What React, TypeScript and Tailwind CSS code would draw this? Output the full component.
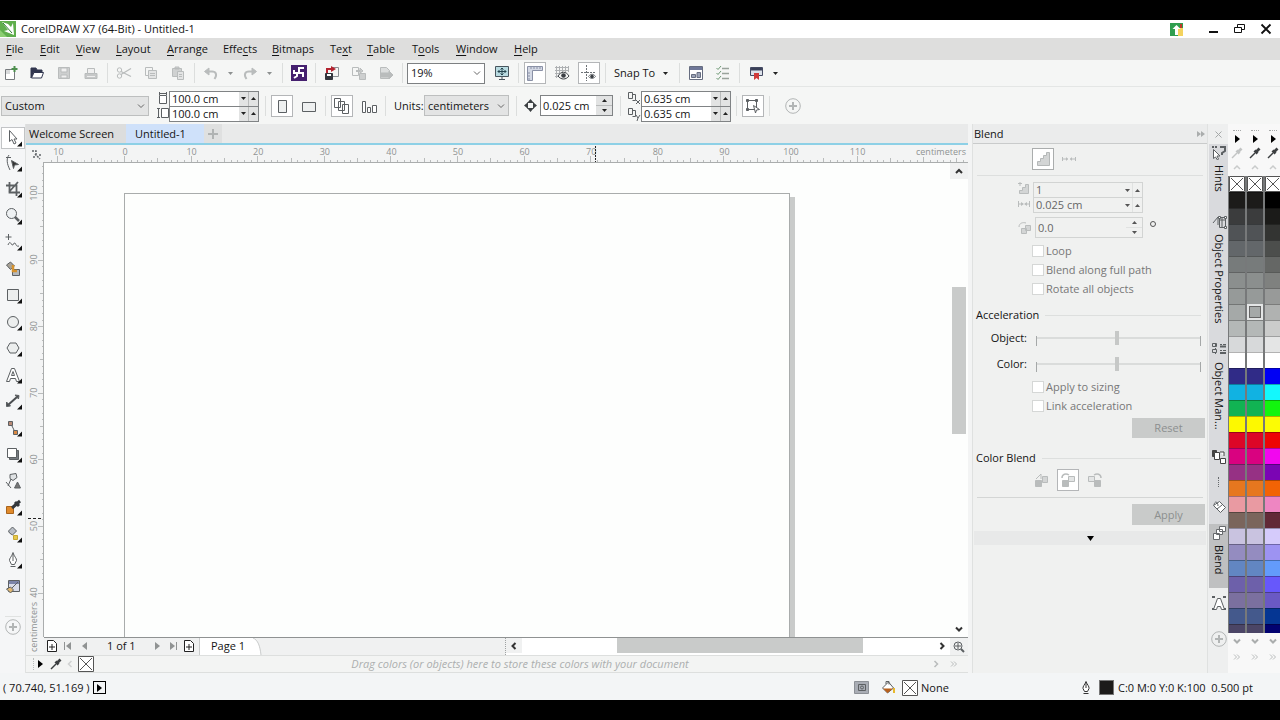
import type { ReactNode } from "react";
import clsx from "clsx";

const STROKE = "#5c6063";
const FADED = "#b9bcbc";

interface IconProps {
  children: ReactNode;
  size?: number;
  stroke?: string;
}

function Icon({ children, size = 16, stroke = STROKE }: IconProps) {
  return (
    <svg
      width={size}
      height={size}
      viewBox={`0 0 ${size} ${size}`}
      fill="none"
      stroke={stroke}
      aria-hidden="true"
      className="shrink-0"
    >
      {children}
    </svg>
  );
}

function IconButton({
  label,
  children,
  active = false,
}: {
  label: string;
  children: ReactNode;
  active?: boolean;
}) {
  return (
    <button
      type="button"
      aria-label={label}
      className="flex h-[22px] w-[27px] shrink-0 items-center justify-center"
    >
      <span
        className={clsx(
          "flex size-[22px] items-center justify-center",
          active && "border border-[#b4b6b8] bg-white",
        )}
      >
        {children}
      </span>
    </button>
  );
}

function Separator() {
  return (
    <div className="flex h-5 w-1.5 shrink-0 justify-center">
      <div className="w-px bg-[#dcdedd]" />
    </div>
  );
}

function Caret({ up = false, color = "#222" }: { up?: boolean; color?: string }) {
  return (
    <svg width="5" height="3" viewBox="0 0 5 3" fill={color} aria-hidden="true">
      <path d={up ? "M0 3h5L2.5 0z" : "M0 0h5L2.5 3z"} />
    </svg>
  );
}

function DropArrow({ label, faded = false }: { label: string; faded?: boolean }) {
  return (
    <button type="button" aria-label={label} className="flex h-5 w-3 shrink-0 items-center justify-center">
      <Caret color={faded ? "#8d9090" : "#222"} />
    </button>
  );
}

function Chevron({ d, color = "#333", width = 1.5 }: { d: string; color?: string; width?: number }) {
  return (
    <svg width="8" height="8" viewBox="0 0 8 8" fill="none" stroke={color} strokeWidth={width} aria-hidden="true">
      <path d={d} />
    </svg>
  );
}

const CHEVRON_UP = "M1 6l3-3 3 3";
const CHEVRON_DOWN = "M1 2.500l3 3 3-3";
const CHEVRON_LEFT = "M5.500 1l-3 3 3 3";
const CHEVRON_RIGHT = "M2.500 1l3 3-3 3";
const CHEVRON_DOUBLE = "M1 1.500l2.500 2.500L1 6.500M4 1.500l2.500 2.500L4 6.500";

/* ---------- title and menus ---------- */

function TitleBar() {
  return (
    <header className="flex h-[18px] shrink-0 items-center bg-white pr-2">
      <svg width="16" height="16" viewBox="0 0 16 16" aria-hidden="true">
        <path fill="#5fae4c" d="M0 0h16v16H0z" />
        <path fill="#8ccf72" d="M0 9l7 7H0z" />
        <path fill="#fff" d="M2 1l6 2 3 3 2-4 1 12-10-4 4-1z" />
        <path stroke="#2f7d32" d="M3 2l9 10" />
      </svg>
      <h1 className="ml-[5px] flex-1 text-[11px]">CorelDRAW X7 (64-Bit) - Untitled-1</h1>
      <svg width="13" height="13" viewBox="0 0 13 13" className="mr-[25px]" aria-hidden="true">
        <path fill="#2f9e4f" d="M0 0h13v13H0z" />
        <path fill="#f4d35e" d="M8 5h5v8H8z" />
        <path fill="#fff" d="M6.500 2l4 4H8v6H5V6H2.500z" />
        <path fill="#c0392b" d="M10 1h2v4h-2z" />
      </svg>
      <button type="button" aria-label="Minimize" className="flex w-[26px] items-center">
        <Icon size={12} stroke="#111"><path strokeWidth="2" d="M1 9h9" /></Icon>
      </button>
      <button type="button" aria-label="Restore" className="flex w-[26px] items-center">
        <Icon size={12} stroke="#111"><path d="M.500 4.500h7v5h-7zM3.500 4V1.500h7v5H8" /></Icon>
      </button>
      <button type="button" aria-label="Close" className="flex items-center">
        <Icon size={12} stroke="#111"><path strokeWidth="1.800" d="M1.500 1.500l9 9M10.500 1.500l-9 9" /></Icon>
      </button>
    </header>
  );
}

const MENUS = [
  { pre: "", key: "F", post: "ile", width: "w-[34px]" },
  { pre: "", key: "E", post: "dit", width: "w-9" },
  { pre: "", key: "V", post: "iew", width: "w-10" },
  { pre: "", key: "L", post: "ayout", width: "w-[51px]" },
  { pre: "", key: "A", post: "rrange", width: "w-14" },
  { pre: "Effe", key: "c", post: "ts", width: "w-[49px]" },
  { pre: "", key: "B", post: "itmaps", width: "w-[58px]" },
  { pre: "Te", key: "x", post: "t", width: "w-[37px]" },
  { pre: "", key: "T", post: "able", width: "w-[45px]" },
  { pre: "T", key: "o", post: "ols", width: "w-11" },
  { pre: "", key: "W", post: "indow", width: "w-[58px]" },
  { pre: "", key: "H", post: "elp", width: "w-10" },
];

function MenuBar() {
  return (
    <nav className="flex h-[22px] shrink-0 items-center bg-[#dededd] pl-1.5">
      {MENUS.map((menu) => (
        <button
          key={menu.pre + menu.key + menu.post}
          type="button"
          className={clsx("shrink-0 text-left whitespace-nowrap", menu.width)}
        >
          {menu.pre}
          <span className="underline underline-offset-2">{menu.key}</span>
          {menu.post}
        </button>
      ))}
    </nav>
  );
}

/* ---------- standard toolbar ---------- */

function StandardToolbar() {
  return (
    <div className="flex h-[27px] shrink-0 items-center border-b border-[#e4e6e5] bg-[#f5f6f5]">
      <div className="-ml-1 flex">
        <IconButton label="New">
          <Icon stroke="#777b7e">
            <path fill="#fff" d="M3.500 4.500h9v10h-9z" />
            <path fill="#d9dbdc" d="M4 5h4v4H4z" stroke="none" />
            <path stroke="#4d8f4d" strokeWidth="2" d="M12.500 1v6M9.500 4h6" />
          </Icon>
        </IconButton>
        <IconButton label="Open">
          <Icon stroke="#31364f">
            <path fill="#31364f" d="M2 3h5l1 2h5v2H5l-3 6z" />
            <path fill="#fff" d="M5 7.500h9.500l-2 5.500h-10z" />
          </Icon>
        </IconButton>
        <IconButton label="Save">
          <Icon stroke={FADED}>
            <path fill="#cdcfcf" d="M2.500 2.500h11v11h-11z" />
            <path fill="#f0f0f0" d="M5 3h6v4H5zM5 10h6v3H5z" />
          </Icon>
        </IconButton>
        <IconButton label="Print">
          <Icon stroke={FADED}>
            <path fill="#c6c8c8" d="M2 8.500h12v5H2z" />
            <path fill="#f0f0f0" d="M4.500 3.500h7v5h-7z" />
            <path d="M4 11.500h8" stroke="#eee" />
          </Icon>
        </IconButton>
      </div>
      <Separator />
      <IconButton label="Cut">
        <Icon stroke={FADED}>
          <path strokeWidth="1.300" d="M15 3.500L5 9.500M15 11.500L5 6.500" />
          <circle cx="3.500" cy="5" r="2.200" /><circle cx="3.500" cy="11" r="2.200" />
        </Icon>
      </IconButton>
      <IconButton label="Copy">
        <Icon stroke={FADED}>
          <path d="M2.500 2.500h7v8h-7z" />
          <path fill="#e3e4e4" d="M5.500 5.500h8v8h-8z" />
          <path d="M7 8.500h5M7 10.500h5" />
        </Icon>
      </IconButton>
      <IconButton label="Paste">
        <Icon stroke={FADED}>
          <path fill="#cfd1d1" d="M2.500 3.500h9v8h-9zM5 2h4v2H5z" />
          <path fill="#e3e4e4" d="M7.500 6.500h6v8h-6z" />
          <path d="M9 9.500h3M9 11.500h3" />
        </Icon>
      </IconButton>
      <Separator />
      <IconButton label="Undo">
        <Icon stroke={FADED}>
          <path fill={FADED} d="M1.500 6.500L6 3v7z" />
          <path strokeWidth="2" d="M5 6.500h4c4 0 5.500 3 2.500 7.500" />
        </Icon>
      </IconButton>
      <DropArrow label="Undo list" faded />
      <IconButton label="Redo">
        <Icon stroke={FADED}>
          <path fill={FADED} d="M14.500 6.500L10 3v7z" />
          <path strokeWidth="2" d="M11 6.500H7c-4 0-5.500 3-2.500 7.500" />
        </Icon>
      </IconButton>
      <DropArrow label="Redo list" faded />
      <div className="w-1" />
      <Separator />
      <IconButton label="Search content">
        <Icon>
          <path fill="#45206f" stroke="none" d="M0 0h16v16H0z" />
          <path stroke="#fff" strokeWidth="2" d="M13 3H8v5M3 5v3h9v4M6 8v3l-3 2" />
        </Icon>
      </IconButton>
      <Separator />
      <IconButton label="Import">
        <Icon stroke="#33363d">
          <path d="M9 2.500h5.500v9H9" stroke="#8c9094" />
          <path fill="#33363d" d="M1.500 8.500h7v6h-7z" />
          <path fill="#fff" stroke="none" d="M3 9h4v2H3z" />
          <path stroke="#b32430" strokeWidth="2" d="M3 8V4h5" />
          <path fill="#b32430" stroke="none" d="M7 1l5 3-5 3z" />
        </Icon>
      </IconButton>
      <IconButton label="Export">
        <Icon stroke={FADED}>
          <path d="M1.500 2.500h6v8h-6z" /><path strokeWidth="2" d="M5 6h6" />
          <path fill="#cdcfcf" d="M8.500 8.500h6v6h-6zM9 3l3 3-3 2z" />
        </Icon>
      </IconButton>
      <IconButton label="Publish to PDF">
        <Icon stroke={FADED}>
          <path fill="#dcdede" d="M2.500 13.500v-11h6l3 3v8z" />
          <path fill={FADED} d="M3 8h8V6l4 4-4 4v-2H3z" />
        </Icon>
      </IconButton>
      <Separator />
      <ComboBox label="Zoom level" value="19%" className="ml-0.5 h-[21px] w-[78px] border-[#7d8082] bg-white" />
      <div className="w-[3px]" />
      <IconButton label="Full-screen preview">
        <Icon stroke="#48565e">
          <path fill="#b9dbe1" d="M1.500 1.500h13v10h-13z" />
          <path d="M5 14.500h6M8 12v2" />
          <path stroke="#24444e" d="M8 3v7M4 6.500h8M6.500 4.500L8 3l1.500 1.500M6.500 8.500L8 10l1.500-1.500M5.500 5L4 6.500 5.500 8M10.500 5L12 6.500 10.500 8" />
        </Icon>
      </IconButton>
      <Separator />
      <IconButton label="Show rulers" active>
        <Icon stroke="#8a91a6">
          <path fill="#d3d8e4" d="M.500 1.500h15v4h-10v10h-5z" />
          <path d="M4 2v2M7 2v2M10 2v2M13 2v2M1 8h2M1 11h2M1 14h2" />
        </Icon>
      </IconButton>
      <IconButton label="Show grid">
        <Icon stroke="#aeb1b3">
          <path d="M2.500 1v12M5.500 1v12M8.500 1v6M11.500 1v6M14.500 1v6M1 2.500h14M1 5.500h14M1 8.500h4M1 11.500h4" />
          <path fill="#f5f6f5" stroke="#3b3f44" d="M4 11c3-5 8-5 11 0-3 4-8 4-11 0z" />
          <circle cx="9.500" cy="10.500" r="2.300" fill="#3b3f44" stroke="none" />
        </Icon>
      </IconButton>
      <IconButton label="Show guidelines" active>
        <Icon stroke="#6e7377">
          <path strokeDasharray="2 1" d="M5.500 0v16M0 7.500h15" />
          <path fill="#fff" d="M7.500 11.500c2-3 5-3 7 0-2 2.500-5 2.500-7 0z" />
          <circle cx="11" cy="11.500" r="1.800" fill="#3b3f44" stroke="none" />
        </Icon>
      </IconButton>
      <Separator />
      <button type="button" className="ml-1.5 flex w-[62px] shrink-0 items-center justify-between whitespace-nowrap">
        Snap To
        <span className="pr-2"><Caret /></span>
      </button>
      <Separator />
      <IconButton label="Options">
        <Icon stroke="#666d80">
          <path fill="#fff" d="M1.500 1.500h13v13h-13z" />
          <path fill="#6f7798" stroke="none" d="M2 2h12v3H2z" />
          <path fill="#9da4b8" d="M3.500 9.500h4v3h-4zM9 7.500h3.500v5H9z" />
        </Icon>
      </IconButton>
      <IconButton label="Application launcher">
        <Icon stroke="#9aa39c">
          <path d="M7 3.500h7M7 8.500h7M7 13.500h7" strokeWidth="1.500" />
          <path stroke="#6f9a75" d="M1.500 3l1.500 1.500L6 1M1.500 8L3 9.500 6 6M1.500 13l1.500 1.500L6 11" />
        </Icon>
      </IconButton>
      <Separator />
      <IconButton label="Welcome">
        <Icon stroke="#454a63">
          <path fill="#dde2ea" d="M2.500 2.500h12v8h-12z" />
          <path fill="#31364f" d="M3 3h11v2H3z" />
          <path fill="#d03a3a" stroke="none" d="M6 8h5v7l-2.500-2L6 15z" />
        </Icon>
      </IconButton>
      <DropArrow label="Welcome list" />
    </div>
  );
}

function ComboBox({ label, value, className }: { label: string; value: string; className: string }) {
  return (
    <div className={clsx("relative flex shrink-0 items-center border", className)}>
      <select aria-label={label} className="h-full w-full appearance-none pl-[3px] outline-none" defaultValue={value}>
        <option>{value}</option>
      </select>
      <span className="pointer-events-none absolute right-[3px]">
        <Chevron d={CHEVRON_DOWN} color="#666" width={1} />
      </span>
    </div>
  );
}

/* ---------- property bar ---------- */

interface SpinFieldProps {
  label: string;
  value: string;
  stacked?: boolean;
  disabled?: boolean;
}

function SpinField({ label, value, stacked = false, disabled = false }: SpinFieldProps) {
  const arrow = clsx(
    "flex flex-1 items-center justify-center",
    disabled ? "bg-[#f0f1f0]" : "bg-[#e2e3e3]",
  );
  return (
    <div
      className={clsx(
        "flex min-w-0 flex-1 items-stretch border",
        stacked ? "h-[21px]" : "h-4",
        disabled ? "border-[#d2d4d3] bg-[#f0f1f0] text-[#666]" : "border-[#808385] bg-white",
      )}
    >
      <input aria-label={label} defaultValue={value} disabled={disabled} className="w-full min-w-0 flex-1 pl-0.5 outline-none" />
      <div className={clsx("flex gap-px", stacked ? "w-4 flex-col-reverse" : "w-[19px]", disabled ? "bg-[#e0e2e1]" : "bg-[#b9bbbb]")}>
        <button type="button" aria-label={`Decrease ${label}`} className={arrow}><Caret color={disabled ? "#555" : undefined} /></button>
        <button type="button" aria-label={`Increase ${label}`} className={arrow}><Caret up color={disabled ? "#555" : undefined} /></button>
      </div>
    </div>
  );
}

function PropertyBar() {
  return (
    <div className="flex h-[37px] shrink-0 items-center bg-[#f5f6f5] pl-px">
      <ComboBox label="Page size" value="Custom" className="h-5 w-[148px] border-[#bdbfbf] bg-[#e3e4e4]" />
      <div className="ml-[7px] flex w-[13px] shrink-0 flex-col items-center gap-[3px]">
        <Icon size={12}><path fill="#fff" d="M2.500 3.500h7v8h-7zM2 1.500h8M2.500 0v3M9.500 0v3" /></Icon>
        <Icon size={12}><path fill="#fff" d="M4.500 1.500h7v9h-7zM1.500 1.500v9M0 1.500h3M0 10.500h3" /></Icon>
      </div>
      <div className="mt-px flex w-[90px] shrink-0 flex-col">
        <div className="flex"><SpinField label="page width" value="100.0 cm" /></div>
        <div className="-mt-px flex"><SpinField label="page height" value="100.0 cm" /></div>
      </div>
      <div className="w-[3px]" />
      <Separator />
      <IconButton label="Portrait" active>
        <Icon><path fill="#eef0f0" d="M4.500 2.500h8v12h-8z" /></Icon>
      </IconButton>
      <IconButton label="Landscape">
        <Icon><path fill="#eef0f0" d="M1.500 4.500h13v9h-13z" /></Icon>
      </IconButton>
      <Separator />
      <IconButton label="All pages" active>
        <Icon><path fill="#fff" d="M8.500 6.500h6v9h-6zM4.500 3.500h6v9h-6zM.500.500h6v9h-6z" /></Icon>
      </IconButton>
      <IconButton label="Current page">
        <Icon><path fill="#fff" d="M1.500 3.500h3v11h-3zM6.500 9.500h3v5h-3zM11.500 7.500h4v7h-4z" /></Icon>
      </IconButton>
      <Separator />
      <label className="ml-1.5 flex shrink-0 items-center">
        <span className="w-[30px]">Units:</span>
        <ComboBox label="Units" value="centimeters" className="h-[21px] w-[85px] border-[#bdbfbf] bg-[#e3e4e4]" />
      </label>
      <div className="w-1" />
      <Separator />
      <div className="ml-1 flex w-[90px] shrink-0 items-center gap-0.5">
        <Icon size={15} stroke="#3c4043">
          <path d="M4.500 4.500h6v6h-6z" />
          <path fill="#3c4043" stroke="none" d="M7.500 1L10 4H5zM7.500 14L10 11H5zM1 7.500L4 5v5zM14 7.500L11 5v5z" />
        </Icon>
        <SpinField label="nudge distance" value="0.025 cm" stacked />
      </div>
      <div className="w-1" />
      <Separator />
      <div className="ml-[3px] flex w-[15px] shrink-0 flex-col items-center gap-0.5">
        <Icon size={14}><path d="M1.500 1.500h4v6h-4zM5.500 3.500h3v6h-3M9 9l4 4M13 9l-4 4" /></Icon>
        <Icon size={14}><path d="M1.500 1.500h4v6h-4zM5.500 3.500h3v6h-3M9 8l2 3 2-3M11 11l-1 3" /></Icon>
      </div>
      <div className="mt-px flex w-[90px] shrink-0 flex-col">
        <div className="flex"><SpinField label="duplicate x" value="0.635 cm" /></div>
        <div className="-mt-px flex"><SpinField label="duplicate y" value="0.635 cm" /></div>
      </div>
      <div className="w-0.5" />
      <Separator />
      <IconButton label="Treat as filled" active>
        <Icon>
          <path d="M2.500 2.500h9v9h-9z" />
          <path fill={STROKE} d="M1.500 1.500h2v2h-2zM10.500 1.500h2v2h-2zM1.500 10.500h2v2h-2z" />
          <path fill="#fff" d="M8.500 7.500l6 4-3 .5-1 3z" />
        </Icon>
      </IconButton>
      <Separator />
      <div className="w-[7px]" />
      <IconButton label="Customize property bar"><PlusCircle /></IconButton>
    </div>
  );
}

function PlusCircle() {
  return (
    <Icon stroke="#b2b5b5">
      <circle cx="8" cy="8" r="7.300" />
      <path strokeWidth="2" d="M8 4v8M4 8h8" />
    </Icon>
  );
}

/* ---------- toolbox ---------- */

const TOOLS: { name: string; flyout: boolean; art: ReactNode }[] = [
  { name: "Pick", flyout: true, art: <path fill="#fff" d="M7.500 3.500v11l2.500-2 2 4.500 2-1-2-4h3z" /> },
  {
    name: "Shape", flyout: true,
    art: <><path d="M7 3c-3 4-2 9 1 15M4 5.500h5" /><path fill="#333" d="M9.500 8.500l7 4-4 .5-1 3.500z" /></>,
  },
  { name: "Crop", flyout: true, art: <path strokeWidth="1.800" d="M7.500 4v10.500H18M4 7.500h10.500V18M16 4L7 14" /> },
  {
    name: "Zoom", flyout: true,
    art: <><circle cx="9.500" cy="8.500" r="5" fill="#eef1f3" /><path strokeWidth="2.500" d="M13 12l4 4" /></>,
  },
  { name: "Freehand", flyout: true, art: <path d="M6.500 3v6M3.500 6h6M6 14c2-5 3-1 4 0s2-3 3-2 1 4 4 3" /> },
  {
    name: "Smart fill", flyout: false,
    art: <><path fill="#a8a296" d="M4.500 7l4-3 4 4-4 3.500z" /><path fill="#b3b7bc" d="M10.500 11.500h7v6h-7z" /><path stroke="#d6922d" strokeWidth="2.500" d="M11 7v6h4" /></>,
  },
  { name: "Rectangle", flyout: true, art: <path fill="#eceeee" d="M5.500 5.500h11v11h-11z" /> },
  { name: "Ellipse", flyout: true, art: <circle cx="11" cy="11" r="5.500" fill="#eceeee" /> },
  { name: "Polygon", flyout: true, art: <path fill="#eceeee" d="M8 6h6l3 5-3 5H8l-3-5z" /> },
  { name: "Text", flyout: true, art: <path fill="#fff" d="M4.500 17.500l5-13h3l5 13h-3l-1-3h-5l-1 3zM9.500 11.500h3l-1.500-4z" /> },
  {
    name: "Dimension", flyout: true,
    art: <><path strokeWidth="2" stroke="#4a4d50" d="M6 15l9-8" /><path fill="#4a4d50" d="M4.500 12l4 4-4 .500zM13 5l4 .500-.500 3.500z" /></>,
  },
  {
    name: "Connector", flyout: true,
    art: <><path d="M9 7l4 8" /><path fill="#b98a76" d="M6.500 4.500h4v4h-4z" /><path fill="#d98842" d="M11.500 13.500h4v4h-4z" /></>,
  },
  {
    name: "Drop shadow", flyout: true,
    art: <><path fill="#777b80" d="M7.500 7.500h9v9h-9z" /><path fill="#fff" d="M5.500 5.500h9v9h-9z" /></>,
  },
  {
    name: "Transparency", flyout: false,
    art: <><path fill="#dfe2e4" d="M8 4.500l6-1 1 4-4 3-3-2zM9 9l-3 7M4 12l5 6" /><path fill="#777" d="M15.500 12l3 6h-6z" /></>,
  },
  {
    name: "Color eyedropper", flyout: true,
    art: <><path fill="#e08a2b" stroke="#a8631d" d="M4.500 10.500h7v7h-7z" /><path stroke="#34383c" strokeWidth="3" d="M10 12l8-7M13 6l4 4" /></>,
  },
  {
    name: "Interactive fill", flyout: true,
    art: <><path fill="#b9bec6" d="M6.500 8l4-4 4 4-4 4-3-2z" /><path fill="#e5c84d" stroke="#c7a730" d="M11.500 12.500h4v4h-4z" /></>,
  },
  { name: "Outline pen", flyout: true, art: <path fill="#fff" d="M11 3.500c-1 4-4 6-3.500 8l2 4h3l2-4c.5-2-2.500-4-3.500-8zM11 5v7M8.500 17.500h5" /> },
  {
    name: "Edit fill", flyout: false,
    art: <><path fill="#d8dce8" d="M6.500 4.500h11v11h-11z" /><path fill="#7c85aa" stroke="none" d="M7 5h10v3H7z" /><path fill="#e1b871" d="M4.500 13l4-2 3 3-3 3z" /><path d="M10 12l6-6" /></>,
  },
];

function Toolbox() {
  return (
    <aside className="flex w-[26px] shrink-0 flex-col items-center border-r border-[#e0e2e1] bg-[#f5f6f7] pt-[3px]">
      <div className="flex h-[473px] flex-col justify-between">
        {TOOLS.map((tool, index) => (
          <button
            key={tool.name}
            type="button"
            aria-label={tool.name}
            className={clsx(
              "flex items-center justify-center",
              index === 0 ? "h-[22px] border border-[#c2c4c6] bg-white" : "h-[26px]",
            )}
          >
            <Icon size={22}>
              {tool.art}
              {tool.flyout && <path fill="#111" stroke="none" d="M20 14.500v5h-5z" />}
            </Icon>
          </button>
        ))}
      </div>
      <div className="mt-4 h-px w-4 bg-[#e0e2e1]" />
      <button type="button" aria-label="Customize toolbox" className="mt-0.5"><PlusCircle /></button>
    </aside>
  );
}

/* ---------- document area ---------- */

function range(count: number) {
  return Array.from({ length: count }, (_, i) => i);
}

// 10 cm on the ruler, in screen pixels, at 19% zoom
const STEP = 66.6;

function HorizontalRuler() {
  const zero = 98;
  return (
    <svg className="block h-[17px] w-full" fontSize="9" fill="#8f9393" stroke="none" aria-label="Horizontal ruler">
      <g stroke="#606468" fill="none">
        <path d="M6 6h4v4M9 9l5 5M14 9v2M7 12h2" strokeDasharray="2 1" strokeWidth="1.500" />
      </g>
      {range(138).map((i) => {
        const x = Math.round(zero + (i - 11) * (STEP / 10)) + 0.5;
        const major = (i - 11) % 10 === 0;
        if (x < 18) return null;
        return <path key={i} stroke="#b9bcbc" d={`M${x} ${major ? 11 : (i - 11) % 5 === 0 ? 13 : 15}V17`} />;
      })}
      {range(13).map((i) => (
        <text key={i} x={zero + 1 + (i - 1) * STEP} y="10" textAnchor="middle">
          {Math.abs(i - 1) * 10}
        </text>
      ))}
      <path stroke="#222" strokeDasharray="2 1" d="M569.500 1v16" />
      <rect x="890" y="1" width="52" height="11" fill="#f3f4f4" />
      <text x="890" y="10">centimeters</text>
    </svg>
  );
}

function VerticalRuler() {
  const top = 31;
  return (
    <svg className="h-full w-[18px] shrink-0" fontSize="9" fill="#8f9393" aria-label="Vertical ruler">
      {range(66).map((i) => {
        const y = Math.round(top + (i - 4) * (STEP / 10)) + 0.5;
        const offset = i - 4;
        return <path key={i} stroke="#b9bcbc" d={`M${offset % 10 === 0 ? 12 : offset % 5 === 0 ? 14 : 16} ${y}H18`} />;
      })}
      {range(7).map((i) => (
        <text key={i} textAnchor="middle" transform={`translate(11 ${top + i * STEP}) rotate(-90)`}>
          {100 - i * 10}
        </text>
      ))}
      <text transform="translate(11 490) rotate(-90)">centimeters</text>
      <path stroke="#222" strokeDasharray="3 2" d="M2 356.500h16" />
      <path stroke="#aaadad" d="M17.500 0v475" />
    </svg>
  );
}

function NavButton({ label, d, className }: { label: string; d: string; className?: string }) {
  return (
    <button type="button" aria-label={label} className={clsx("flex w-4 items-center justify-center", className)}>
      <svg width="8" height="8" viewBox="0 0 8 8" fill="#909393" aria-hidden="true"><path d={d} /></svg>
    </button>
  );
}

function AddPage() {
  return (
    <Icon size={12} stroke="#222"><path fill="#fff" d="M1.500.500h6l3 3v8h-9zM6 4v6M3 7h6" /></Icon>
  );
}

function PageBar() {
  return (
    <div className="flex h-[18px] shrink-0 items-stretch border-t border-[#8f9292] bg-[#f0f1f1]">
      <div className="flex items-center pb-0.5 pl-0.5">
        <button type="button" aria-label="Add page before"><AddPage /></button>
        <NavButton label="First page" d="M0 0h1v8H0zM7 0v8L2 4z" className="ml-0.5" />
        <NavButton label="Previous page" d="M6 0v8L1 4z" className="ml-px" />
        <span className="ml-3.5 w-[42px]">1 of 1</span>
        <NavButton label="Next page" d="M2 0v8l5-4z" />
        <NavButton label="Last page" d="M7 0h1v8H7zM1 0v8l5-4z" />
        <button type="button" aria-label="Add page after" className="ml-0.5"><AddPage /></button>
      </div>
      <button type="button" className="ml-1 w-[54px] border-l border-[#c9cbcb] bg-white pb-0.5 pl-[11px] text-left">
        Page 1
      </button>
      <svg width="9" height="17" viewBox="0 0 9 17" fill="#fff" aria-hidden="true">
        <path d="M0 0c5 2 7 8 8 17H0z" /><path fill="none" stroke="#c9cbcb" d="M0 0c5 2 7 8 8 17" />
      </svg>
      <div className="flex-1" />
      <div className="w-1 border-r border-dotted border-[#9fa2a2]" />
      <div className="flex w-[444px] items-stretch bg-white pb-0.5">
        <button type="button" aria-label="Scroll left" className="flex w-4 items-center justify-center bg-[#f0f1f1]">
          <Chevron d={CHEVRON_LEFT} width={2} />
        </button>
        <div className="ml-[95px] w-[246px] bg-[#c9cbca]" />
        <div className="flex-1" />
        <button type="button" aria-label="Scroll right" className="flex w-4 items-center justify-center">
          <Chevron d={CHEVRON_RIGHT} width={2} />
        </button>
      </div>
      <button type="button" aria-label="Navigator" className="flex w-[18px] items-center justify-center">
        <Icon size={12}><circle cx="5" cy="5" r="4" /><path d="M5 2v6M2 5h6" /><path strokeWidth="2" d="M8 8l3 3" /></Icon>
      </button>
    </div>
  );
}

function NoColor({ className }: { className: string }) {
  return (
    <svg viewBox="0 0 16 16" fill="#fff" stroke="#555" className={clsx("block shrink-0", className)} aria-label="No color">
      <path d="M.500.500h15v15H.500zM2 2l12 12M14 2L2 14" />
    </svg>
  );
}

function Eyedropper({ color = "#3b3e40" }: { color?: string }) {
  return (
    <svg width="12" height="12" viewBox="0 0 12 12" fill="none" stroke={color} aria-hidden="true">
      <path d="M1 11l5-5" strokeWidth="1.500" /><path d="M5.500 3.500l3 3M7 5l3.500-3.500" strokeWidth="2.800" />
    </svg>
  );
}

function ColorTray() {
  return (
    <div className="flex h-[18px] shrink-0 items-center border-y border-[#dddfde] bg-[#f3f4f3] pb-px">
      <div className="ml-1 h-3 w-1 border-r border-dotted border-[#b9bcbc]" />
      <svg width="6" height="8" viewBox="0 0 6 8" className="ml-1" aria-hidden="true"><path d="M0 0v8l5-4z" /></svg>
      <button type="button" aria-label="Document eyedropper" className="ml-1.5"><Eyedropper /></button>
      <span className="ml-1"><Chevron d={CHEVRON_LEFT} color="#d0d2d2" /></span>
      <NoColor className="ml-1 size-4" />
      <p className="flex-1 overflow-hidden pl-3.5 text-center whitespace-nowrap text-[#acafaf] italic">
        Drag colors (or objects) here to store these colors with your document
      </p>
      <div className="mr-[10px] flex w-[26px] justify-between">
        <Chevron d={CHEVRON_RIGHT} color="#b9bcbc" />
        <Chevron d={CHEVRON_DOUBLE} color="#b9bcbc" width={1} />
      </div>
    </div>
  );
}

function DocumentArea() {
  return (
    <main className="flex min-w-0 flex-1 flex-col bg-[#f3f4f4]">
      <div className="flex h-[19px] shrink-0 items-stretch bg-[#e9eaea]">
        <button type="button" className="w-[100px] bg-[#dcdddd] pl-[3px] text-left">Welcome Screen</button>
        <button type="button" className="w-[78px] bg-[#cfe1fa] pl-[9px] text-left">Untitled-1</button>
        <button type="button" aria-label="New document" className="flex w-[18px] items-center justify-center bg-[#dfe0e0]">
          <Icon size={10} stroke="#b0b3b3"><path strokeWidth="2" d="M5 0v10M0 5h10" /></Icon>
        </button>
      </div>
      <div className="shrink-0 border-t-2 border-[#8dd0e6]">
        <HorizontalRuler />
      </div>
      <div className="flex min-h-0 flex-1">
        <VerticalRuler />
        <div className="flex min-w-0 flex-1 flex-col">
          <div className="flex min-h-0 flex-1 border-t border-[#aaadad] bg-[#fdfefd]">
            <div className="flex min-w-0 flex-1 overflow-hidden pt-[30px] pl-20">
              <div className="w-[666px] border-t border-r border-l border-[#a9acac] bg-[#fdfefd] shadow-[5px_4px_0_#c9cbca]" />
            </div>
            <div className="flex w-[18px] flex-col items-center bg-[#fdfefd]">
              <button type="button" aria-label="Scroll up" className="flex h-4 w-full items-center justify-center bg-[#f0f1f1]">
                <Chevron d={CHEVRON_UP} width={2} />
              </button>
              <div className="mt-[108px] h-[147px] w-[14px] bg-[#c9cbca]" />
              <div className="flex-1" />
              <button type="button" aria-label="Scroll down" className="flex h-4 items-center">
                <Chevron d={CHEVRON_DOWN} width={2} />
              </button>
            </div>
          </div>
          <PageBar />
        </div>
      </div>
      <ColorTray />
    </main>
  );
}

/* ---------- blend docker ---------- */

function CheckRow({ label }: { label: string }) {
  return (
    <label className="ml-[59px] flex h-[19px] items-center gap-0.5 text-[#777]">
      <input type="checkbox" disabled className="size-3 appearance-none border border-[#d5d7d6] bg-white" />
      {label}
    </label>
  );
}

function SliderRow({ label }: { label: string }) {
  return (
    <label className="flex h-[26px] items-center pr-1.5">
      <span className="w-[54px] text-right">{label}</span>
      <span className="ml-[9px] flex h-4 flex-1 items-center">
        <span className="mt-1.5 h-2.5 w-px bg-[#a5a8a8]" />
        <input
          type="range"
          disabled
          defaultValue={49}
          className="h-0.5 min-w-0 flex-1 appearance-none bg-[#dadcdb] [&::-webkit-slider-thumb]:h-3.5 [&::-webkit-slider-thumb]:w-1 [&::-webkit-slider-thumb]:appearance-none [&::-webkit-slider-thumb]:bg-[#c6c8c7]"
        />
        <span className="mt-1.5 h-2.5 w-px bg-[#a5a8a8]" />
      </span>
    </label>
  );
}

function SectionTitle({ children }: { children: ReactNode }) {
  return (
    <h3 className="flex h-5 items-center gap-1.5 pr-1.5 pl-[3px] whitespace-nowrap">
      {children}
      <span className="h-px flex-1 bg-[#dddfde]" />
    </h3>
  );
}

function BlendDocker() {
  return (
    <section className="ml-1 flex w-[236px] shrink-0 flex-col border-r border-l border-[#dfe1e0] bg-[#f0f1f0]">
      <header className="flex h-5 items-center border-b border-[#c9cbcb] bg-[#ebecec] pr-0.5 pl-px">
        <h2 className="flex-1">Blend</h2>
        <svg width="8" height="6" viewBox="0 0 8 6" fill="#aaadad" aria-hidden="true"><path d="M0 0v6l4-3zM4 0v6l4-3z" /></svg>
      </header>
      <div className="mt-1 ml-[59px] flex h-[22px] items-center">
        <button type="button" aria-label="Blend steps" className="flex size-[22px] items-center justify-center border border-[#aaadad] bg-white">
          <Icon stroke="#b5b8b8"><path fill="#d3d5d5" d="M2.500 10.500h3v-3h3v-3h3v-3h3v13h-12z" /></Icon>
        </button>
        <button type="button" aria-label="Blend spacing" className="ml-[7px]">
          <Icon stroke={FADED}><path d="M1.500 6v4M14.500 6v4M2 8h5M9 8h5" /><path fill={FADED} stroke="none" d="M5 6l2 2-2 2zM11 6L9 8l2 2z" /></Icon>
        </button>
      </div>
      <div className="mx-1 mt-[5px] h-px bg-[#dddfde]" />
      <div className="mt-1.5 flex pl-[45px]">
        <div className="flex w-[15px] flex-col gap-1">
          <Icon size={12} stroke={FADED}><path fill="#d3d5d5" d="M1.500 8.500h3v-3h3v-3h3v9h-9z" /><path d="M0 1.500h4M2 0v4" /></Icon>
          <Icon size={12} stroke={FADED}><path d="M.500 3v6M11.500 3v6M1 6h4M7 6h4" /><path fill={FADED} stroke="none" d="M3 4l3 2-3 2zM9 4L6 6l3 2z" /></Icon>
        </div>
        <div className="flex w-[110px] flex-col">
          <div className="flex"><SpinField label="blend steps" value="1" disabled /></div>
          <div className="-mt-px flex"><SpinField label="blend spacing" value="0.025 cm" disabled /></div>
        </div>
      </div>
      <div className="mt-1 flex items-center pl-[45px]">
        <div className="w-[17px]">
          <Icon size={13} stroke={FADED}><path d="M1 6c0-4 4-5 7-4" /><path fill="#d3d5d5" d="M7.500 4.500h5v5h-5zM3.500 7.500h5v5h-5z" /></Icon>
        </div>
        <div className="flex w-[108px]"><SpinField label="blend direction" value="0.0" stacked disabled /></div>
        <span className="mb-2 ml-[7px] size-1.5 rounded-full border border-[#555]" />
      </div>
      <div className="mt-[3px]">
        <CheckRow label="Loop" />
        <CheckRow label="Blend along full path" />
        <CheckRow label="Rotate all objects" />
      </div>
      <div className="mt-[7px]">
        <SectionTitle>Acceleration</SectionTitle>
        <SliderRow label="Object:" />
        <SliderRow label="Color:" />
        <CheckRow label="Apply to sizing" />
        <CheckRow label="Link acceleration" />
      </div>
      <button type="button" disabled className="mt-[3px] mr-0.5 h-5 w-[73px] self-end bg-[#c9cbca] text-[#8c8f8f]">Reset</button>
      <div className="mt-2.5">
        <SectionTitle>Color Blend</SectionTitle>
        <div className="ml-[54px] flex h-6 items-center">
          <IconButton label="Direct blend">
            <Icon stroke={FADED}><path fill="#d3d5d5" d="M9.500 4.500h5v6h-5z" /><path fill={FADED} d="M2.500 8.500h6v6h-6z" /><path d="M3 7l5-5v5" /></Icon>
          </IconButton>
          <IconButton label="Clockwise blend" active>
            <Icon stroke={FADED}><path fill="#e3e5e5" d="M8.500 4.500h6v5h-6z" /><path fill={FADED} d="M2.500 8.500h6v6h-6z" /><path strokeWidth="1.500" d="M2 6c0-4 4-5 7-3" /></Icon>
          </IconButton>
          <IconButton label="Counterclockwise blend">
            <Icon stroke={FADED}><path fill="#e3e5e5" d="M1.500 4.500h6v5h-6z" /><path fill={FADED} d="M7.500 8.500h6v6h-6z" /><path strokeWidth="1.500" d="M7 3c3-2 7-1 7 3" /></Icon>
          </IconButton>
        </div>
      </div>
      <div className="mx-1 mt-[5px] h-px bg-[#d4d6d5]" />
      <button type="button" disabled className="mt-1.5 mr-0.5 h-[21px] w-[73px] self-end bg-[#c9cbca] text-[#8c8f8f]">Apply</button>
      <button type="button" aria-label="Show more options" className="mx-px mt-1.5 flex h-3.5 items-center justify-center bg-[#e8e9e9]">
        <svg width="7" height="5" viewBox="0 0 7 5" aria-hidden="true"><path d="M0 0h7L3.500 5z" /></svg>
      </button>
    </section>
  );
}

function DockerTab({ label, height, active = false, children }: { label: string; height: string; active?: boolean; children: ReactNode }) {
  return (
    <button
      type="button"
      aria-label={label}
      className={clsx("flex w-full flex-col items-center pt-px", height, active ? "bg-[#bfc0c1]" : "bg-[#d9dadd]")}
    >
      {children}
    </button>
  );
}

function TabText({ children }: { children: ReactNode }) {
  return <span className="mt-1 whitespace-nowrap [writing-mode:vertical-rl]">{children}</span>;
}

function DockerTabs() {
  return (
    <nav className="flex w-5 shrink-0 flex-col items-center bg-[#eeefef] pl-px">
      <button type="button" aria-label="Close docker" className="flex h-5 w-full items-center pl-1.5">
        <Icon size={7} stroke="#a5a8a8"><path d="M.500.500l6 6M6.500.500l-6 6" /></Icon>
      </button>
      <DockerTab label="Hints" height="h-[69px]">
        <Icon>
          <path fill="#fff" d="M2.500 4.500v9l2-1.500 2 3 1-1-1.500-3h3z" />
          <path strokeWidth="2" d="M9 2h5v4l-3 2v2" /><path d="M1 2h6" strokeDasharray="2 1" strokeWidth="2" />
        </Icon>
        <TabText>Hints</TabText>
      </DockerTab>
      <DockerTab label="Object Properties" height="h-[128px]">
        <Icon>
          <path d="M2 9l5-6v8M8.500 3.500h6v10h-6zM8 6h6M11 4v10" /><path fill="#fff" d="M7.500 2.500h2v2h-2zM13.500 2.500h2v2h-2zM13.500 12.500h2v2h-2z" />
        </Icon>
        <TabText>Object Properties</TabText>
      </DockerTab>
      <DockerTab label="Object Manager" height="h-[107px]">
        <Icon><path strokeDasharray="2 2" d="M4.500 2v12" /><path d="M1.500 1.500h4v3h-4zM1.500 7.500h4v3h-4zM9 2.500h2M12 2.500h3M9 8.500h2M12 8.500h3" /><path strokeWidth="2" d="M9 4.500h6M9 11h6" /></Icon>
        <TabText>Object Man...</TabText>
      </DockerTab>
      <DockerTab label="Transformations" height="h-[50px]">
        <Icon stroke="#444"><path fill="#444" d="M1.500 1.500h4v6h-4z" /><path fill="#fff" d="M9.500 9.500h5v5h-5zM3.500 3.500h5v7h-5zM9 3h4v4" /></Icon>
        <span className="mt-3 h-2.5 border-l border-dotted border-[#66696c]" />
      </DockerTab>
      <DockerTab label="Fillet" height="h-[26px]">
        <Icon><path fill="#fff" d="M2.500 6.500l6-4 6 6-5 5zM3 6c1-5 4-3 4 1M6 10l5-4" /></Icon>
      </DockerTab>
      <DockerTab label="Blend" height="h-16" active>
        <Icon stroke="#66696c"><path fill="#fff" d="M8.500 1.500h6v5h-6zM5.500 4.500h6v5h-6zM2.500 8.500h6v6h-6z" /></Icon>
        <TabText>Blend</TabText>
      </DockerTab>
      <button type="button" aria-label="Text properties" className="flex h-[29px] items-center">
        <Icon><path fill="#fff" d="M2.500 14.500l4-11h3l4 11h-3l-1-3h-3l-1 3z" /><path strokeWidth="2" d="M1 2h3M12 2h3M1 14h2M13 14h2" /></Icon>
      </button>
      <button type="button" aria-label="Customize dockers" className="mt-[14px]"><PlusCircle /></button>
    </nav>
  );
}

/* ---------- palettes ---------- */

const GRAYS = ["#1c1b1a", "#3b3c3d", "#505356", "#63676a", "#777b7b", "#8b8f8e", "#969a99", "#a5a9a8", "#b4b8b7", "#d7d9da", "#ffffff"];
const CMYK = [
  ...GRAYS,
  "#302b87", "#11b2e2", "#11b353", "#fdf900", "#dc0626", "#d90280", "#963184", "#e6771f", "#e99aa2",
  "#7a655c", "#c9c3e0", "#948cc0", "#6286c2", "#6d60aa", "#7b709f", "#44598c", "#4b4566",
];
const RGB = [
  "#000000", "#1b1b19", "#333432", "#4c4e4c", "#656765", "#7f817f", "#989a99", "#b0b2b1", "#cbcccb", "#e4e5e5", "#ffffff",
  "#0000f4", "#13f8fd", "#12f50e", "#fcfc04", "#ed0505", "#f207ef", "#7b05b4", "#f26305", "#ee86c2",
  "#612937", "#d5cbfb", "#9d93f2", "#639bfb", "#6758fb", "#6a59c4", "#053693", "#020270",
];

function PaletteColumn({ name, colors, selected, faded = false }: { name: string; colors: string[]; selected?: number; faded?: boolean }) {
  return (
    <div className="flex w-[18px] shrink-0 flex-col items-center bg-[#f8f8f8]">
      <div className="flex h-[52px] flex-col items-center pt-1.5">
        <div className="w-2 border-t border-dotted border-[#a5a8a8]" />
        <svg width="5" height="8" viewBox="0 0 5 8" className="mt-1" aria-hidden="true"><path d="M0 0v8l5-4z" /></svg>
        <button type="button" aria-label={`${name} eyedropper`} className="mt-1"><Eyedropper color={faded ? "#c2c4c4" : undefined} /></button>
        <span className="mt-1"><Chevron d={CHEVRON_UP} color="#c9cbcb" /></span>
      </div>
      <div className="flex min-h-0 flex-1 flex-col overflow-hidden border-x border-[#77797a]">
        <NoColor className="size-4" />
        {colors.map((color, index) => (
          <button
            key={color}
            type="button"
            aria-label={`${name} ${color}`}
            style={{ backgroundColor: color }}
            className={clsx(
              "h-4 w-4 shrink-0",
              index === selected
                ? "border-2 border-[#e4e6e6] outline-1 -outline-offset-3 outline-[#666]"
                : "border-t border-black/30",
            )}
          />
        ))}
      </div>
      <div className="flex h-10 flex-col items-center gap-2 pt-1">
        <Chevron d={CHEVRON_DOWN} color="#aaadad" width={2} />
        <Chevron d={CHEVRON_DOUBLE} color="#b9bcbc" width={1} />
      </div>
    </div>
  );
}

/* ---------- status bar ---------- */

function StatusBar() {
  return (
    <footer className="flex h-[27px] shrink-0 items-center bg-[#f3f5f6] pt-0.5">
      <span className="w-[93px] pl-[3px] whitespace-nowrap">( 70.740, 51.169 )</span>
      <button type="button" aria-label="Cursor info" className="flex size-[13px] items-center justify-center border border-black">
        <svg width="5" height="8" viewBox="0 0 5 8" aria-hidden="true"><path d="M0 0v8l5-4z" /></svg>
      </button>
      <div className="flex-1" />
      <Icon size={15}><path fill="#a9adb5" stroke="#8c9096" d="M.500 1.500h14v12h-14z" /><path d="M4.500 4.500h7v6h-7z" /><circle cx="8" cy="7.500" r="1.500" /></Icon>
      <div className="ml-3">
        <Icon size={15}><path fill="#fff" d="M1.500 8l6-6 5 6-6 5z" /><path fill="#b8601c" stroke="none" d="M2 8.500h10l-5.500 4.500z" /><path stroke="#e8b92e" strokeWidth="2" d="M13 8v5" /><path d="M5 4V1.500h3v3" /></Icon>
      </div>
      <NoColor className="ml-1.5 size-4" />
      <span className="ml-[3px] w-[158px]">None</span>
      <Icon size={14} stroke="#333"><path fill="#fff" d="M7 .500c-1 3-3.500 5-3 7l1.500 3h3l1.500-3c.5-2-2-4-3-7zM7 2v5M4.500 12.500h5" /></Icon>
      <span className="ml-1.5 size-[15px] border border-[#777] bg-[#1c1b1a]" />
      <span className="ml-1 w-[162px] whitespace-nowrap">C:0 M:0 Y:0 K:100 &nbsp;0.500 pt</span>
    </footer>
  );
}

export default function App() {
  return (
    <div className="flex h-screen min-h-[720px] flex-col overflow-hidden bg-black py-5 font-['Open_Sans','Noto_Sans',sans-serif] text-[11px] leading-[14px] text-[#141414]">
      <TitleBar />
      <MenuBar />
      <StandardToolbar />
      <PropertyBar />
      <div className="flex min-h-0 flex-1 bg-[#f3f4f4]">
        <Toolbox />
        <DocumentArea />
        <BlendDocker />
        <DockerTabs />
        <div className="flex w-[52px] shrink-0 overflow-hidden">
          <PaletteColumn name="Document palette" colors={CMYK} faded />
          <PaletteColumn name="CMYK palette" colors={CMYK} selected={7} />
          <PaletteColumn name="RGB palette" colors={RGB} />
        </div>
      </div>
      <StatusBar />
    </div>
  );
}
